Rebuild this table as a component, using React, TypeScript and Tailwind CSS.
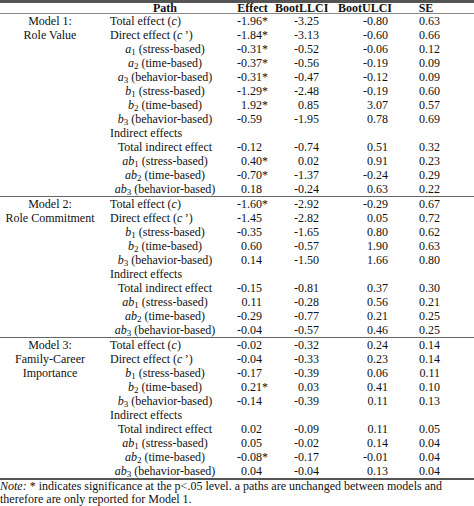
import React from "react";

type Row = {
  path: React.ReactNode;
  align: "left" | "center";
  vals?: [string, string, string, string];
};

const sub = (v: string, n: number, kind: string) => (
  <>
    <i>{v}</i>
    <sub className="not-italic">{n}</sub> ({kind}-based)
  </>
);

const total: React.ReactNode = (
  <>
    Total effect (<i>c</i>)
  </>
);
const direct: React.ReactNode = (
  <>
    Direct effect (<i>c</i>&thinsp;’)
  </>
);

const model1: Row[] = [
  { path: total, align: "left", vals: ["-1.96*", "-3.25", "-0.80", "0.63"] },
  { path: direct, align: "left", vals: ["-1.84*", "-3.13", "-0.60", "0.66"] },
  { path: sub("a", 1, "stress"), align: "center", vals: ["-0.31*", "-0.52", "-0.06", "0.12"] },
  { path: sub("a", 2, "time"), align: "center", vals: ["-0.37*", "-0.56", "-0.19", "0.09"] },
  { path: sub("a", 3, "behavior"), align: "center", vals: ["-0.31*", "-0.47", "-0.12", "0.09"] },
  { path: sub("b", 1, "stress"), align: "center", vals: ["-1.29*", "-2.48", "-0.19", "0.60"] },
  { path: sub("b", 2, "time"), align: "center", vals: ["1.92*", "0.85", "3.07", "0.57"] },
  { path: sub("b", 3, "behavior"), align: "center", vals: ["-0.59", "-1.95", "0.78", "0.69"] },
  { path: "Indirect effects", align: "left" },
  { path: "Total indirect effect", align: "center", vals: ["-0.12", "-0.74", "0.51", "0.32"] },
  { path: sub("ab", 1, "stress"), align: "center", vals: ["0.40*", "0.02", "0.91", "0.23"] },
  { path: sub("ab", 2, "time"), align: "center", vals: ["-0.70*", "-1.37", "-0.24", "0.29"] },
  { path: sub("ab", 3, "behavior"), align: "center", vals: ["0.18", "-0.24", "0.63", "0.22"] },
];

const model2: Row[] = [
  { path: total, align: "left", vals: ["-1.60*", "-2.92", "-0.29", "0.67"] },
  { path: direct, align: "left", vals: ["-1.45", "-2.82", "0.05", "0.72"] },
  { path: sub("b", 1, "stress"), align: "center", vals: ["-0.35", "-1.65", "0.80", "0.62"] },
  { path: sub("b", 2, "time"), align: "center", vals: ["0.60", "-0.57", "1.90", "0.63"] },
  { path: sub("b", 3, "behavior"), align: "center", vals: ["0.14", "-1.50", "1.66", "0.80"] },
  { path: "Indirect effects", align: "left" },
  { path: "Total indirect effect", align: "center", vals: ["-0.15", "-0.81", "0.37", "0.30"] },
  { path: sub("ab", 1, "stress"), align: "center", vals: ["0.11", "-0.28", "0.56", "0.21"] },
  { path: sub("ab", 2, "time"), align: "center", vals: ["-0.29", "-0.77", "0.21", "0.25"] },
  { path: sub("ab", 3, "behavior"), align: "center", vals: ["-0.04", "-0.57", "0.46", "0.25"] },
];

const model3: Row[] = [
  { path: total, align: "left", vals: ["-0.02", "-0.32", "0.24", "0.14"] },
  { path: direct, align: "left", vals: ["-0.04", "-0.33", "0.23", "0.14"] },
  { path: sub("b", 1, "stress"), align: "center", vals: ["-0.17", "-0.39", "0.06", "0.11"] },
  { path: sub("b", 2, "time"), align: "center", vals: ["0.21*", "0.03", "0.41", "0.10"] },
  { path: sub("b", 3, "behavior"), align: "center", vals: ["-0.14", "-0.39", "0.11", "0.13"] },
  { path: "Indirect effects", align: "left" },
  { path: "Total indirect effect", align: "center", vals: ["0.02", "-0.09", "0.11", "0.05"] },
  { path: sub("ab", 1, "stress"), align: "center", vals: ["0.05", "-0.02", "0.14", "0.04"] },
  { path: sub("ab", 2, "time"), align: "center", vals: ["-0.08*", "-0.17", "-0.01", "0.04"] },
  { path: sub("ab", 3, "behavior"), align: "center", vals: ["0.04", "-0.04", "0.13", "0.04"] },
];

function DataRow({ row }: { row: Row }) {
  const v = row.vals;
  const star = v ? v[0].endsWith("*") : false;
  return (
    <div className="grid h-[14px] grid-cols-[130px_32px_13px_44px_69px_52px] leading-[14px]">
      <div className={row.align === "left" ? "whitespace-nowrap pl-[10px]" : "whitespace-nowrap text-center"}>
        {row.path}
      </div>
      <div className="text-right">{v ? v[0].replace("*", "") : ""}</div>
      <div>{star ? "*" : ""}</div>
      <div className="text-right">{v ? v[1] : ""}</div>
      <div className="text-right">{v ? v[2] : ""}</div>
      <div className="text-right">{v ? v[3] : ""}</div>
    </div>
  );
}

function Block({ labels, rows }: { labels: string[]; rows: Row[] }) {
  return (
    <div className="flex">
      <div className="w-[100px] shrink-0 text-center leading-[14px]">
        {labels.map((l) => (
          <div key={l} className="h-[14px] whitespace-nowrap">
            {l}
          </div>
        ))}
      </div>
      <div>
        {rows.map((r, i) => (
          <DataRow key={i} row={r} />
        ))}
      </div>
    </div>
  );
}

export default function App() {
  return (
    <div className="h-[506px] w-[474px] overflow-hidden bg-white text-[12px] text-[#111] [font-family:'Liberation_Serif','Times_New_Roman',serif]">
      <div className="h-[3px] bg-[#555]" />
      <div className="grid h-[10px] grid-cols-[100px_130px_45px_44px_92px_30px] font-bold leading-[11px]">
        <div />
        <div className="text-center">Path</div>
        <div className="text-center">Effect</div>
        <div className="whitespace-nowrap text-center">BootLLCI</div>
        <div className="whitespace-nowrap text-center">BootULCI</div>
        <div className="text-center">SE</div>
      </div>
      <div className="h-px bg-[#888]" />
      <Block labels={["Model 1:", "Role Value"]} rows={model1} />
      <div className="h-px bg-[#666]" />
      <Block labels={["Model 2:", "Role Commitment"]} rows={model2} />
      <div className="h-px bg-[#666]" />
      <Block labels={["Model 3:", "Family-Career", "Importance"]} rows={model3} />
      <div className="h-[2px] bg-[#555]" />
      <div className="leading-[13px]">
        <div className="whitespace-nowrap">
          <i>Note:</i> * indicates significance at the p&lt;.05 level. a paths are unchanged between models and
        </div>
        <div>therefore are only reported for Model 1.</div>
      </div>
    </div>
  );
}
